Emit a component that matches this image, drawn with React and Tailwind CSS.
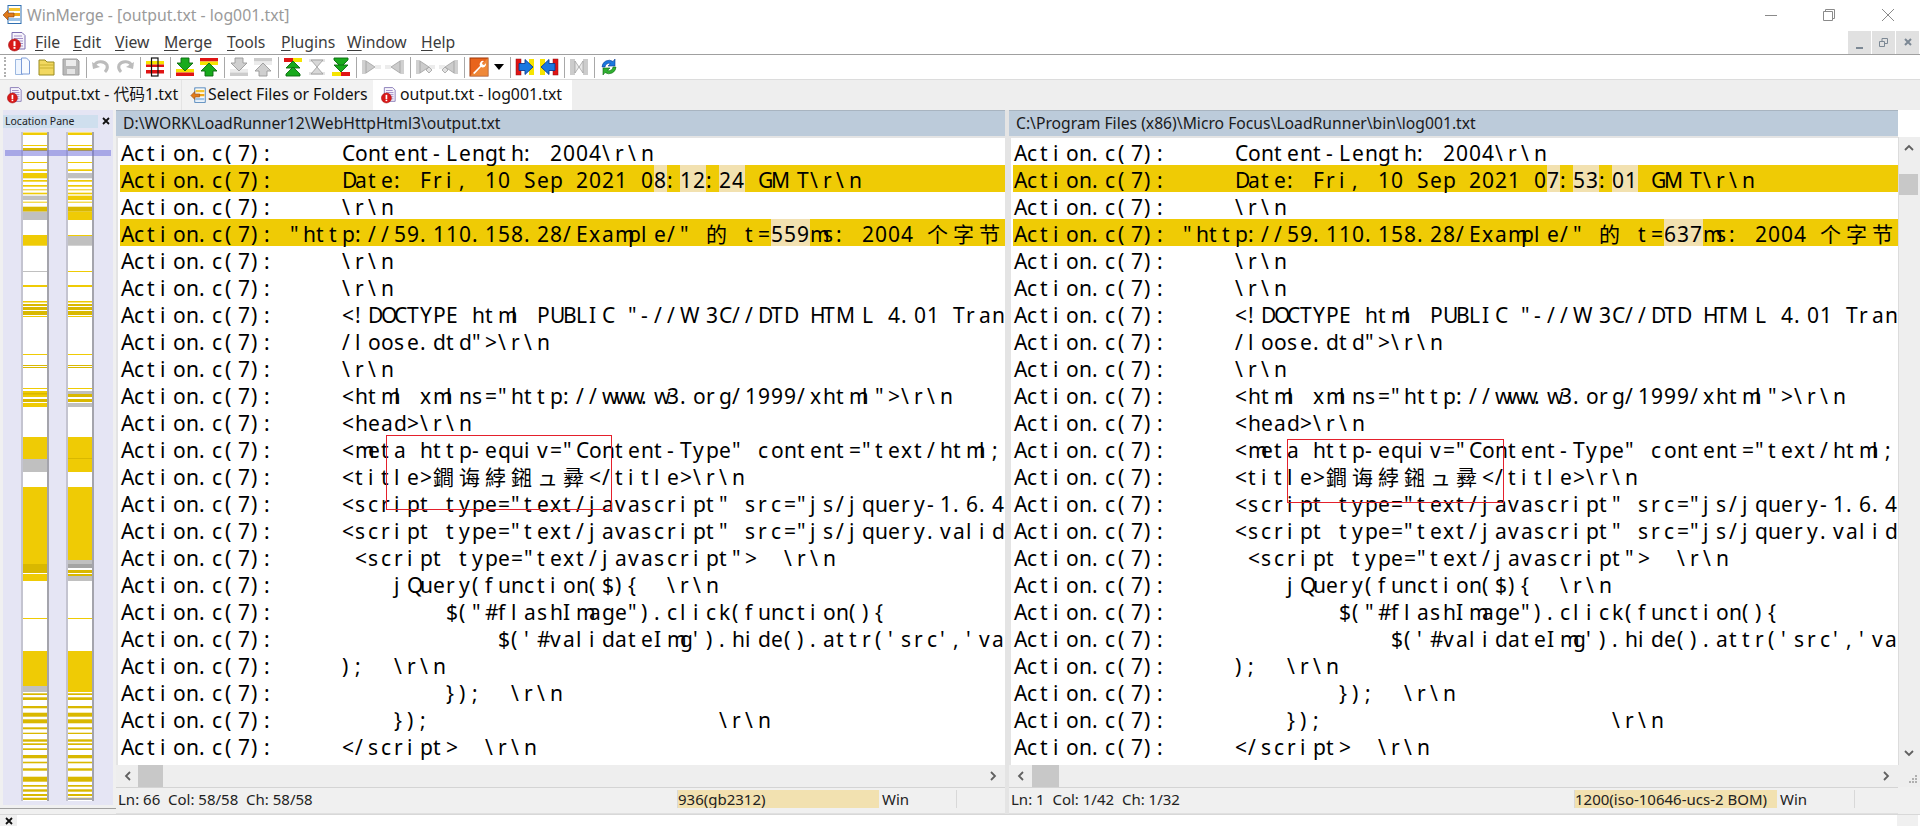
import React from "react";

const UI = { fontFamily: '"Noto Sans","Noto Sans CJK SC",sans-serif' };

const common = [
  "     Content-Length: 2004\\r\\n",
  "",
  "     \\r\\n",
  "",
  "     \\r\\n",
  "     \\r\\n",
  '     <!DOCTYPE html PUBLIC "-//W3C//DTD HTML 4.01 Transitional//EN" "http://www.w3.org/TR/html4',
  '     /loose.dtd">\\r\\n',
  "     \\r\\n",
  '     <html xmlns="http://www.w3.org/1999/xhtml">\\r\\n',
  "     <head>\\r\\n",
  '     <meta http-equiv="Content-Type" content="text/html; charset=gb2312" />\\r\\n',
  "     <title>鐧诲綍鎺ュ彛</title>\\r\\n",
  '     <script type="text/javascript" src="js/jquery-1.6.4.min.js"></script>\\r\\n',
  '     <script type="text/javascript" src="js/jquery.validate.min.js"></script>\\r\\n',
  '      <script type="text/javascript">  \\r\\n',
  "         jQuery(function($){  \\r\\n",
  '             $("#flashImage").click(function(){',
  "                 $('#validateImg').hide().attr('src','validate.jsp');",
  "     );  \\r\\n",
  "             });  \\r\\n",
  "         });                      \\r\\n",
  "     </script>  \\r\\n",
  '     <link href="css/style.css" rel="stylesheet" type="text/css" />',
];

function buildRows(date, time) {
  const r = common.map((b) => "Action.c(7):" + b);
  r[1] = "Action.c(7):     Date: Fri, 10 Sep 2021 " + date + " GMT\\r\\n";
  r[3] = 'Action.c(7): "http://59.110.158.28/Example/" 的 t=' + time + "ms: 2004 个字节";
  return r;
}

const leftRows = buildRows("08:12:24", "559");
const rightRows = buildRows("07:53:01", "637");
const hlCols = { 1: [41, 43, 44, 46, 47], 3: [50, 51, 52] };

function Line({ text, index }) {
  const yellow = index === 1 || index === 3;
  const marks = hlCols[index] || [];
  let col = 0;
  const cells = Array.from(text).map((ch, i) => {
    const wide = ch.charCodeAt(0) > 0x2e80 || ch === "M" || ch === "W";
    const on = marks.includes(col);
    col += wide ? 2 : 1;
    return (
      <span
        key={i}
        className={
          (wide ? "w-[26px] " : "w-[13px] ") +
          "inline-block h-[27px] " +
          (on ? "bg-[#f2e1b0]" : "")
        }
      >
        {ch === " " ? "\u00a0" : ch}
      </span>
    );
  });
  return (
    <div className={"h-[27px] pl-[1px] whitespace-nowrap " + (yellow ? "bg-[#efcb05]" : "")}>
      {cells}
    </div>
  );
}

function DocBadge({ className }) {
  return (
    <svg viewBox="0 0 18 20" className={className}>
      <path d="M4 .5h10l3 3V17H4z" fill="#f6f4fb" stroke="#7d6fb0" />
      <path d="M6 4h8M6 6.5h9M9 9h6M11 11.5h4M11 14h4" stroke="#a48fc8" strokeWidth="1.2" />
      <circle cx="6.5" cy="13" r="6" fill="#d81818" stroke="#a01010" strokeWidth=".6" />
      <rect x="5.5" y="9.2" width="2" height="5" fill="#fff" />
      <rect x="5.5" y="15" width="2" height="1.8" fill="#fff" />
    </svg>
  );
}

function MergeLogo({ className }) {
  return (
    <svg viewBox="0 0 20 20" className={className}>
      <rect x="6" y=".5" width="13" height="18" fill="#fff" stroke="#2f6fb0" />
      <rect x="7" y="3" width="11" height="3" fill="#f4c430" />
      <rect x="7" y="8" width="11" height="3" fill="#f0a818" />
      <rect x="7" y="13" width="11" height="3" fill="#9ec4e8" />
      <path d="M1 10l5-5v3h6v4H6v3z" fill="#e07a1a" stroke="#804010" strokeWidth=".6" />
    </svg>
  );
}

const S = ({ children }) => (
  <svg viewBox="0 0 20 20" className="w-5 h-5">
    {children}
  </svg>
);

const ON = { y: "#f6e400", r: "#e01414", a: "#18aa1c", s: "#0c6a10" };
const OFF = { y: "#ececec", r: "#cccccc", a: "#cfcfcf", s: "#9a9a9a" };

const Down = ({ c, y = 0 }) => (
  <path d={`M6 ${1 + y}h8v5h4l-8 8-8-8h4z`} fill={c.a} stroke={c.s} strokeWidth=".9" />
);
const Up = ({ c, y = 0 }) => (
  <path d={`M6 ${19 + y}h8v-5h4l-8-8-8 8h4z`} fill={c.a} stroke={c.s} strokeWidth=".9" />
);

const NextDiff = ({ c }) => (
  <S>
    <rect x="1" y="12" width="18" height="3.5" fill={c.y} />
    <rect x="1" y="15.5" width="18" height="3.5" fill={c.r} />
    <Down c={c} y={0} />
  </S>
);
const PrevDiff = ({ c }) => (
  <S>
    <rect x="1" y="1" width="18" height="3.5" fill={c.r} />
    <rect x="1" y="4.5" width="18" height="3.5" fill={c.y} />
    <Up c={c} y={0} />
  </S>
);
const FirstDiff = ({ c }) => (
  <S>
    <rect x="1" y="1" width="9" height="4" fill={c.r} />
    <rect x="10" y="1" width="9" height="4" fill={c.y} />
    <path d="M10 4l7 7H3z" fill={c.a} stroke={c.s} strokeWidth=".9" />
    <path d="M10 10l7 7v2H3v-2z" fill={c.a} stroke={c.s} strokeWidth=".9" />
  </S>
);
const LastDiff = ({ c }) => (
  <S>
    <path d="M3 1h14v2l-7 7-7-7z" fill={c.a} stroke={c.s} strokeWidth=".9" />
    <path d="M3 8h14l-7 7z" fill={c.a} stroke={c.s} strokeWidth=".9" />
    <rect x="1" y="15" width="9" height="4" fill={c.y} />
    <rect x="10" y="15" width="9" height="4" fill={c.r} />
  </S>
);
const Hourglass = () => (
  <S>
    <rect x="2" y="2" width="16" height="3" fill="#e4e4e4" />
    <rect x="2" y="15" width="16" height="3" fill="#e4e4e4" />
    <path d="M4 3h12l-6 7 6 7H4l6-7z" fill="#d8d8d8" stroke="#9a9a9a" strokeWidth=".8" />
  </S>
);
const Current = () => (
  <S>
    <rect x="1" y="4" width="18" height="3.5" fill={ON.y} />
    <rect x="1" y="7.5" width="18" height="2.5" fill={ON.r} />
    <rect x="1" y="13" width="18" height="3.5" fill={ON.r} />
    <rect x="6.5" y="1" width="6.5" height="18" fill="none" stroke="#111" strokeWidth="1.2" />
  </S>
);
const CopyR = ({ flip, extra }) => (
  <S>
    <g transform={flip ? "matrix(-1 0 0 1 20 0)" : undefined}>
      <rect x="1" y="3" width="4" height="14" fill="#d0d0d0" />
      <rect x="14" y="8" width="6" height="4" fill="#ececec" />
      <path d="M5 4l9 6-9 6z" fill="#cccccc" stroke="#a0a0a0" strokeWidth=".8" />
      {extra && <path d="M11 13l3 3 3-3-3-3z" fill="#e0e0e0" stroke="#a0a0a0" strokeWidth=".8" />}
    </g>
  </S>
);
const Sync = ({ flip }) => (
  <S>
    <g transform={flip ? "matrix(-1 0 0 1 20 0)" : undefined}>
      <rect x="1" y="2" width="5" height="16" fill="#e01414" stroke="#901010" strokeWidth=".5" />
      <rect x="14" y="2" width="5" height="16" fill="#f6e400" />
      <path d="M4 6.5h6V2.5L18 10l-8 7.5v-4H4z" fill="#1a78e0" stroke="#0c3a90" strokeWidth=".9" />
    </g>
  </S>
);

const tools = [
  <S>
    <path d="M2.5 2.5h7v15h-7z" fill="#eef5ff" stroke="#9cb8e0" />
    <path d="M8.5 1h5l3 3v13h-8z" fill="#f8fbff" stroke="#7c9cd8" />
  </S>,
  <S>
    <path d="M2 5V3h6l2 2h7v13H2z" fill="#f2d860" stroke="#988a20" />
    <path d="M2 8h15M2 11h15" stroke="#c8b030" />
  </S>,
  <S>
    <path d="M2 2h14l2 2v14H2z" fill="#b8b8b8" stroke="#9c9c9c" />
    <rect x="5" y="3" width="10" height="6" fill="#ececec" />
    <rect x="6" y="12" width="8" height="5" fill="#e4e4e4" />
  </S>,
  "sep",
  <S>
    <path d="M3 9a7 6 0 0 1 13-1c1 3 0 5-2 7" fill="none" stroke="#bcbcbc" strokeWidth="3" />
    <path d="M1 5l1 7 7-2z" fill="#bcbcbc" />
  </S>,
  <S>
    <path d="M17 9a7 6 0 0 0-13-1c-1 3 0 5 2 7" fill="none" stroke="#bcbcbc" strokeWidth="3" />
    <path d="M19 5l-1 7-7-2z" fill="#bcbcbc" />
  </S>,
  "sep",
  <Current />,
  "sep",
  <NextDiff c={ON} />,
  <PrevDiff c={ON} />,
  "sep",
  <NextDiff c={OFF} />,
  <PrevDiff c={OFF} />,
  "sep",
  <FirstDiff c={ON} />,
  <Hourglass />,
  <LastDiff c={ON} />,
  "sep",
  <CopyR />,
  <CopyR flip />,
  "sep",
  <CopyR extra />,
  <CopyR flip extra />,
  "sep",
  <S>
    <rect x="1" y="1" width="18" height="18" fill="#e8641c" stroke="#a03808" />
    <path d="M1 19L19 1v18z" fill="#f4a04c" opacity=".6" />
    <path d="M4 16l7-7a3.5 3.5 0 0 1 4-5l-2 2 1 2 2-.4 1-1.6a3.5 3.5 0 0 1-5 4l-6.500 7z" fill="#fff" />
  </S>,
  "drop",
  "sep",
  <Sync />,
  <Sync flip />,
  "sep",
  <S>
    <rect x="1" y="2" width="5" height="16" fill="#cccccc" />
    <rect x="14" y="2" width="5" height="16" fill="#cccccc" />
    <path d="M6 4l4 6-4 6zM14 4l-4 6 4 6z" fill="#e8e8e8" stroke="#9a9a9a" strokeWidth=".7" />
  </S>,
  "sep",
  <S>
    <path d="M3 10a7 7 0 0 1 11-5.500L16 2v7h-7l2.500-2.400A4 4 0 0 0 6 10z" fill="#1a78e0" stroke="#0c3a90" strokeWidth=".6" />
    <path d="M17 10a7 7 0 0 1-11 5.500L4 18v-7h7l-2.500 2.400A4 4 0 0 0 14 10z" fill="#30b030" stroke="#0c6a10" strokeWidth=".6" />
  </S>,
];

function Toolbar() {
  return (
    <div className="h-[24px] flex items-center pl-[4px]">
      <div className="w-[2px] h-[20px] mr-[5px] border-l-2 border-dotted border-[#b0b0b0]" />
      {tools.map((t, i) =>
        t === "sep" ? (
          <div key={i} className="w-[6px] flex justify-center">
            <div className="w-px h-[21px] bg-[#a8a8a8]" />
          </div>
        ) : t === "drop" ? (
          <div key={i} className="w-[16px] flex justify-center">
            <div className="w-0 h-0 border-x-[5px] border-x-transparent border-t-[6px] border-t-black" />
          </div>
        ) : (
          <div key={i} className="w-[24px] flex justify-center">
            {t}
          </div>
        )
      )}
    </div>
  );
}

const menus = [
  ["F", "ile", "w-[38px]"],
  ["E", "dit", "w-[42px]"],
  ["V", "iew", "w-[49px]"],
  ["M", "erge", "w-[63px]"],
  ["T", "ools", "w-[54px]"],
  ["P", "lugins", "w-[66px]"],
  ["W", "indow", "w-[74px]"],
  ["H", "elp", "w-[40px]"],
];

const Chevron = ({ d, className }) => (
  <svg viewBox="0 0 12 12" className={className}>
    <path d={d} fill="none" stroke="#606060" strokeWidth="1.8" />
  </svg>
);

function Location() {
  const Y = "#efcb05";
  const D = "#d9b800";
  const G = "#c0c0c0";
  const shared = [
    [132.5, 135, Y], [145, 146, Y], [148, 151, D], [162, 163, Y], [169.3, 171, Y],
    [180, 181.700, Y], [185, 186.700, Y], [189.300, 190.300, Y], [192.700, 194.300, Y],
    [201.700, 202.700, Y], [285, 287, Y], [301, 302.500, Y], [304, 306, D], [307, 310, D],
    [311, 315, D], [316, 317, Y], [354, 355, Y], [365, 366, D], [367, 368, D], [388, 389, Y],
    [399, 402, D], [437, 459, Y], [487, 560, Y], [618, 619, Y], [651, 686, Y],
    [693.300, 695, D], [697.300, 700, D], [706, 708.300, D], [712.700, 716.700, D],
    [719.300, 723.300, D], [727.300, 729.300, D], [732.700, 734, D], [739.300, 741.700, D],
    [743.300, 745, D], [748.300, 750, D], [755, 758.300, D], [761.700, 763.300, D],
    [768.300, 770.700, D], [776.700, 781.700, D], [785, 786.700, D], [789.300, 791.700, D],
    [794, 796, D], [797.700, 798, D],
  ];
  const leftOnly = [
    [173, 178.300, Y], [195.700, 200, G], [206.700, 211.700, D], [211.700, 220, G], [235, 245.700, Y],
    [271, 272, G], [391, 397, Y], [393, 394.500, D], [403, 407, Y], [459, 472, G],
    [560, 564, Y], [564, 573, D], [574, 581, Y], [686, 692, G], [798, 800, D],
  ];
  const rightOnly = [
    [173, 178.300, G], [195.700, 200, Y], [206.700, 211.700, D], [211.700, 220, Y], [235, 236, Y],
    [236, 245.700, G], [271, 272, Y], [391, 394, G], [394, 397, D], [403, 407, G],
    [459, 472, Y], [458, 459, D], [560, 564, G], [564, 568, "#a4a4a4"], [570, 573, D],
    [574, 576, D], [576, 581, G], [686, 692, Y], [798, 800, "#a8a8a8"],
  ];
  const Bar = ({ list }) => (
    <div className="w-[28px] h-[669px] border-l-[2px] border-r-[2px] border-l-[#c4c4d0] border-r-[#a4a4ac] bg-white">
      <svg viewBox="0 132 24 669" preserveAspectRatio="none" className="block w-full h-full">
        {list.map(([a, b, c], i) => (
          <rect key={i} x="0" y={a} width="24" height={b - a} fill={c} />
        ))}
      </svg>
    </div>
  );
  return (
    <div className="relative w-[116px] pl-[3px] h-[704px] bg-[#f0f0f0] shrink-0 flex flex-col">
      <div className="w-[110px] h-[695px] bg-[#e5e5f4]">
        <div className="h-[16px] mt-[3px] flex items-center">
          <div className="w-[95px] h-[13px] bg-[#cfdfee] text-[10.500px] leading-[13px] pl-[2px] text-[#222]">
            Location Pane
          </div>
          <svg viewBox="0 0 8 8" className="w-[8px] h-[8px] ml-[4px]">
            <path d="M1 1l6 6M7 1L1 7" stroke="#111" strokeWidth="1.800" />
          </svg>
        </div>
        <div className="flex gap-[17px] pl-[18px] pt-[3px]">
          <Bar list={[...shared, ...leftOnly]} />
          <Bar list={[...shared, ...rightOnly]} />
        </div>
      </div>
      <div className="absolute left-[5px] top-[40px] w-[106px] h-[6px] bg-[#6a6ad8]/50" />
      <div className="mt-[3px] ml-[-3px] h-px bg-[#a0a0a0]" />
    </div>
  );
}

function Pane({ width, path, rows, rect, thumb, ln, encGap, children }) {
  return (
    <div className={"flex flex-col shrink-0 " + width}>
      <div className="h-[26px] bg-[#bccbda] border-t border-[#a8b4c0] text-[15.700px] leading-[25px] text-[#1a1a1a] whitespace-nowrap overflow-hidden pl-[7px]">
        {path}
      </div>
      <div className="h-[629px] border-t-2 border-l-2 border-[#e4e4e4] bg-white relative overflow-hidden">
        <div
          className="text-[21px] leading-[31px] text-black pl-[2px]"
          style={{ fontFamily: '"Noto Sans","Noto Sans CJK SC",sans-serif' }}
        >
          {rows.map((r, i) => (
            <Line key={i} text={r} index={i} />
          ))}
        </div>
        <div className={"absolute border border-[#e4202c] " + rect} />
      </div>
      <div className="h-[22px] bg-[#eeeeee] flex items-center shrink-0">
        <Chevron d="M8 2L4 6l4 4" className="w-[12px] h-[12px] ml-[6px] shrink-0" />
        <div className={"h-[22px] bg-[#c8c8c8] shrink-0 " + thumb} />
        <Chevron d="M4 2l4 4-4 4" className="w-[12px] h-[12px] ml-auto mr-[6px] shrink-0" />
      </div>
      <div className="h-[3px] bg-[#f0f0f0] border-t border-[#d4d4d4]" />
      <div className="h-[24px] bg-[#f0f0f0] flex text-[15px] leading-[18px] text-[#222] whitespace-pre border-b border-[#e0e0e0]">
        <div className={"h-[18px] pl-[2px] border-r border-[#d8d8d8] " + encGap}>{ln}</div>
        {children}
      </div>
    </div>
  );
}

export default function App() {
  return (
    <div className="w-[1920px] h-[826px] bg-white overflow-hidden flex flex-col" style={UI}>
      <div className="h-[30px] shrink-0 flex items-center relative">
        <MergeLogo className="w-[20px] h-[20px] ml-[2px] mr-[5px]" />
        <div className="text-[15.800px] text-[#9a9a9a] leading-[20px]">WinMerge - [output.txt - log001.txt]</div>
        <div className="ml-auto flex items-center">
          <svg viewBox="0 0 12 12" className="w-[12px] h-[12px] mr-[46px]">
            <path d="M0 6.500h12" stroke="#8a8a8a" />
          </svg>
          <svg viewBox="0 0 12 12" className="w-[12px] h-[12px] mr-[47px]">
            <path d="M.5 2.500h9v9h-9zM2.500 2.500v-2h9v9h-2" fill="none" stroke="#8a8a8a" />
          </svg>
          <svg viewBox="0 0 12 12" className="w-[12px] h-[12px] mr-[26px]">
            <path d="M0 0l12 12M12 0L0 12" stroke="#8a8a8a" />
          </svg>
        </div>
      </div>
      <div className="h-[24px] shrink-0 flex items-center relative">
        <DocBadge className="w-[18px] h-[20px] ml-[8px] mr-[9px]" />
        <div className="flex text-[15.750px] text-[#3c3c3c] leading-[22px]">
          {menus.map(([a, b, w]) => (
            <div key={a} className={w}>
              <span className="underline underline-offset-2">{a}</span>
              {b}
            </div>
          ))}
        </div>
        <div className="ml-auto flex gap-px mr-px">
          <div className="w-[23px] h-[23px] bg-[#e1e1e1] flex items-end justify-center pb-[5px]">
            <div className="w-[7px] h-[2px] bg-[#7c8894]" />
          </div>
          <div className="w-[23px] h-[23px] bg-[#e1e1e1] flex items-center justify-center">
            <svg viewBox="0 0 9 9" className="w-[9px] h-[9px]">
              <path d="M.5 3.500h5v5h-5zM3 3V.5h5.500v5H6" fill="none" stroke="#7c8894" />
            </svg>
          </div>
          <div className="w-[23px] h-[23px] bg-[#e1e1e1] flex items-center justify-center">
            <svg viewBox="0 0 8 8" className="w-[8px] h-[8px]">
              <path d="M1 1l6 6M7 1L1 7" stroke="#7c8894" strokeWidth="2" />
            </svg>
          </div>
        </div>
      </div>
      <div className="h-px bg-[#a0a0a0] shrink-0" />
      <Toolbar />
      <div className="h-px bg-[#dcdcdc] shrink-0" />
      <div className="h-[30px] shrink-0 bg-[#eeeeee] flex items-stretch text-[15.800px] text-[#111] whitespace-nowrap">
        <div className="w-[182px] bg-[#f2f2f2] flex items-center pl-[7px] border-r border-[#e4e4e4]">
          <DocBadge className="w-[15px] h-[17px] mr-[4px]" />
          output.txt - 代码1.txt
        </div>
        <div className="w-[191px] bg-[#f2f2f2] flex items-center pl-[8px]">
          <MergeLogo className="w-[16px] h-[17px] mr-[2px]" />
          Select Files or Folders
        </div>
        <div className="w-[199px] bg-white flex items-center pl-[8px]">
          <DocBadge className="w-[15px] h-[17px] mr-[4px]" />
          output.txt - log001.txt
        </div>
      </div>
      <div className="flex h-[704px] shrink-0">
        <Location />
        <Pane
          width="w-[889px]"
          path={"D:\\WORK\\LoadRunner12\\WebHttpHtml3\\output.txt"}
          rows={leftRows}
          rect="left-[268px] top-[297px] w-[226px] h-[75px]"
          thumb="ml-[4px] w-[25px]"
          ln="Ln: 66  Col: 58/58  Ch: 58/58"
          encGap="w-[562px]"
        >
          <div className="w-[201px] h-[18px] bg-[#f2e1b0] overflow-hidden">936(gb2312)</div>
          <div className="w-[78px] h-[18px] pl-[3px] border-r border-[#d8d8d8]">Win</div>
        </Pane>
        <div className="w-[4px] shrink-0 bg-[#e4e4e4]" />
        <div className="flex flex-col w-[911px] shrink-0">
          <div className="flex h-[704px]">
            <Pane
              width="w-[889px]"
              path={"C:\\Program Files (x86)\\Micro Focus\\LoadRunner\\bin\\log001.txt"}
              rows={rightRows}
              rect="left-[276px] top-[301px] w-[217px] h-[64px]"
              thumb="ml-[5px] w-[27px]"
              ln="Ln: 1  Col: 1/42  Ch: 1/32"
              encGap="w-[566px]"
            >
              <div className="w-[202px] h-[18px] bg-[#f2e1b0] overflow-hidden">1200(iso-10646-ucs-2 BOM)</div>
              <div className="w-[78px] h-[18px] pl-[3px] border-r border-[#d8d8d8]">Win</div>
            </Pane>
            <div className="w-[22px] shrink-0 flex flex-col">
              <div className="h-[27px] bg-white" />
              <div className="h-[628px] bg-[#eeeeee] flex flex-col items-center pr-[2px] border-l border-[#dcdcdc]">
                <Chevron d="M2 8l4-4 4 4" className="w-[12px] h-[12px] mt-[5px]" />
                <div className="w-full h-[21px] bg-[#c8c8c8] mt-[20px]" />
                <Chevron d="M2 4l4 4 4-4" className="w-[12px] h-[12px] mt-auto mb-[6px]" />
              </div>
              <div className="h-[22px] bg-[#eeeeee] relative">
                <svg viewBox="0 0 12 12" className="w-[12px] h-[12px] ml-[8px] mt-[9px]">
                  <path d="M9 1h2v2H9zM6 4h2v2H6zM9 4h2v2H9zM3 7h2v2H3zM6 7h2v2H6zM9 7h2v2H9z" fill="#b0b0b0" />
                </svg>
              </div>
              <div className="flex-1 bg-[#f0f0f0]" />
            </div>
          </div>
        </div>
      </div>
      <div className="flex-1 flex border-t border-[#d8d8d8]">
        <div className="w-[17px] bg-[#f0f0f0] flex items-center justify-center">
          <svg viewBox="0 0 8 8" className="w-[8px] h-[8px]">
            <path d="M1 1l6 6M7 1L1 7" stroke="#111" strokeWidth="1.800" />
          </svg>
        </div>
        <div className="flex-1 bg-white" />
        <div className="w-[21px] bg-[#f0f0f0] mr-[2px]" />
      </div>
    </div>
  );
}
